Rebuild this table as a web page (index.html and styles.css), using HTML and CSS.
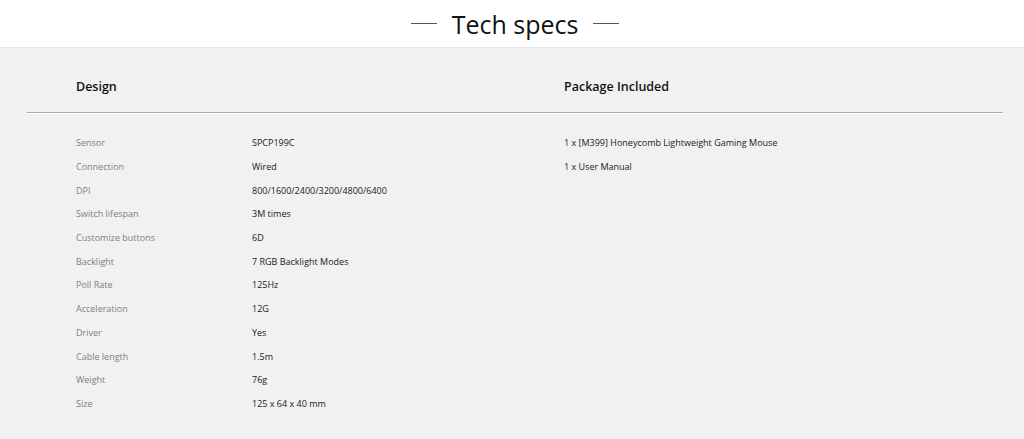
FILE: index.html
```html
<!DOCTYPE html>
<html lang="en">
<head>
    <meta charset="UTF-8">
    <meta name="viewport" content="width=device-width, initial-scale=1.0">
    <title>Tech specs</title>
    <link rel="stylesheet" href="styles.css">
</head>
<body>
    <div class="cabecera">
        <h2 class="titulo"><span class="raya"></span>Tech specs<span class="raya"></span></h2>
    </div>

    <div class="specs">
        <div class="specs-encabezados">
            <h3 class="encabezado">Design</h3>
            <h3 class="encabezado">Package Included</h3>
        </div>
        <div class="specs-cuerpo">
            <div class="columna">
                <div class="fila"><span class="etiqueta">Sensor</span><span class="valor">SPCP199C</span></div>
                <div class="fila"><span class="etiqueta">Connection</span><span class="valor">Wired</span></div>
                <div class="fila"><span class="etiqueta">DPI</span><span class="valor">800/1600/2400/3200/4800/6400</span></div>
                <div class="fila"><span class="etiqueta">Switch lifespan</span><span class="valor">3M times</span></div>
                <div class="fila"><span class="etiqueta">Customize buttons</span><span class="valor">6D</span></div>
                <div class="fila"><span class="etiqueta">Backlight</span><span class="valor">7 RGB Backlight Modes</span></div>
                <div class="fila"><span class="etiqueta">Poll Rate</span><span class="valor">125Hz</span></div>
                <div class="fila"><span class="etiqueta">Acceleration</span><span class="valor">12G</span></div>
                <div class="fila"><span class="etiqueta">Driver</span><span class="valor">Yes</span></div>
                <div class="fila"><span class="etiqueta">Cable length</span><span class="valor">1.5m</span></div>
                <div class="fila"><span class="etiqueta">Weight</span><span class="valor">76g</span></div>
                <div class="fila"><span class="etiqueta">Size</span><span class="valor">125 x 64 x 40 mm</span></div>
            </div>
            <div class="columna">
                <div class="fila"><span class="valor">1 x [M399] Honeycomb Lightweight Gaming Mouse</span></div>
                <div class="fila"><span class="valor">1 x User Manual</span></div>
            </div>
        </div>
    </div>
</body>
</html>
```

FILE: styles.css
```css
* {
    box-sizing: border-box;
}

body {
    margin: 0;
    background-color: #f1f1f1;
    font-family: "Open Sans", "Noto Sans", sans-serif;
    color: #222;
}

.cabecera {
    background-color: #fff;
    height: 48px;
    border-bottom: 1px solid #e8e8e8;
}

.titulo {
    margin: 0;
    height: 47px;
    padding-left: 6px;
    display: flex;
    justify-content: center;
    align-items: center;
    gap: 15px;
    font-size: 25px;
    font-weight: 400;
    color: #111;
}

.raya {
    width: 26px;
    height: 1px;
    background-color: #555;
}

.specs {
    padding: 0 21px 0 27px;
}

.specs-encabezados {
    display: grid;
    grid-template-columns: 1fr 1fr;
    height: 65px;
    align-items: center;
    border-bottom: 1px solid #aaa;
    box-shadow: 0 1px 0 #fff;
    padding-top: 13px;
}

.encabezado {
    margin: 0;
    padding-left: 49px;
    font-size: 12.5px;
    font-weight: 600;
    color: #111;
}

.specs-cuerpo {
    display: grid;
    grid-template-columns: 1fr 1fr;
    padding-top: 18px;
}

.columna {
    padding-left: 49px;
}

.fila {
    display: flex;
    height: 23.7px;
    align-items: center;
    font-size: 9px;
}

.etiqueta {
    width: 176px;
    color: #808080;
}

.valor {
    color: #1a1a1a;
}
```
